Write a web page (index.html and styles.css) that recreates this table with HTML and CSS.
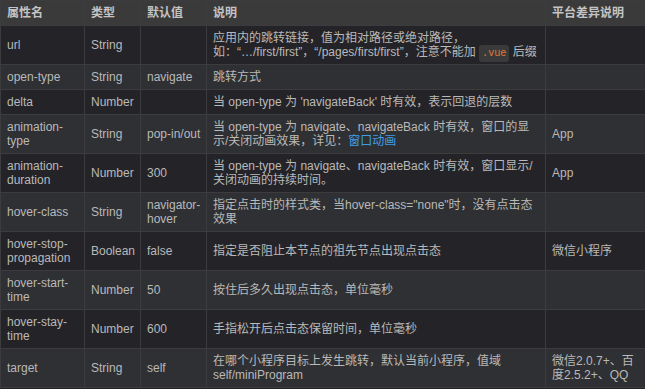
FILE: index.html
```html
<!DOCTYPE html>
<html lang="zh-CN">
<head>
<meta charset="utf-8">
<title>navigator 属性</title>
<link rel="stylesheet" href="styles.css">
</head>
<body>
<table class="props">
  <colgroup>
    <col class="c-name">
    <col class="c-type">
    <col class="c-default">
    <col class="c-desc">
    <col class="c-platform">
  </colgroup>
  <thead>
    <tr><th>属性名</th><th>类型</th><th>默认值</th><th>说明</th><th>平台差异说明</th></tr>
  </thead>
  <tbody>
    <tr><td>url</td><td>String</td><td></td><td>应用内的跳转链接，值为相对路径或绝对路径，<span class="nowrap">如：“…/first/first”，</span>“/pages/first/first”，注意不能加 <code class="code">.vue</code> 后缀</td><td></td></tr>
    <tr><td>open-type</td><td>String</td><td>navigate</td><td>跳转方式</td><td></td></tr>
    <tr><td>delta</td><td>Number</td><td></td><td>当 open-type 为 'navigateBack' 时有效，表示回退的层数</td><td></td></tr>
    <tr><td>animation-type</td><td>String</td><td>pop-in/out</td><td>当 open-type 为 navigate、navigateBack 时有效，窗口的显示/关闭动画效果，详见：<a class="link" href="#">窗口动画</a></td><td>App</td></tr>
    <tr><td>animation-duration</td><td>Number</td><td>300</td><td>当 open-type 为 navigate、navigateBack 时有效，窗口显示/关闭动画的持续时间。</td><td>App</td></tr>
    <tr><td>hover-class</td><td>String</td><td>navigator-hover</td><td>指定点击时的样式类，当hover-class="none"时，没有点击态效果</td><td></td></tr>
    <tr><td>hover-stop-propagation</td><td>Boolean</td><td>false</td><td>指定是否阻止本节点的祖先节点出现点击态</td><td>微信小程序</td></tr>
    <tr><td>hover-start-time</td><td>Number</td><td>50</td><td>按住后多久出现点击态，单位毫秒</td><td></td></tr>
    <tr><td>hover-stay-time</td><td>Number</td><td>600</td><td>手指松开后点击态保留时间，单位毫秒</td><td></td></tr>
    <tr><td>target</td><td>String</td><td>self</td><td>在哪个小程序目标上发生跳转，默认当前小程序，值域self/miniProgram</td><td>微信2.0.7+、百度2.5.2+、QQ</td></tr>
  </tbody>
</table>
</body>
</html>
```
FILE: styles.css
```css
html, body {
  margin: 0;
  padding: 0;
  background: #242428;
}

body {
  font-family: "Liberation Sans", "Noto Sans CJK SC", sans-serif;
  font-size: 12px;
  line-height: 14px;
  color: #b9b9b9;
}

.props {
  width: 645px;
  table-layout: fixed;
  border-collapse: collapse;
}

.c-name { width: 84px; }
.c-type { width: 56px; }
.c-default { width: 66px; }
.c-desc { width: 339px; }
.c-platform { width: 100px; }

.props th,
.props td {
  border: 1px solid #3c3c3e;
  padding: 5px 4px 5px 6px;
  text-align: left;
  vertical-align: middle;
}

.props th {
  background: #3a3a3a;
  color: #c4c4c4;
  font-weight: bold;
}

.props tbody tr {
  background: #242428;
}

.props tbody tr:nth-child(even) {
  background: #2f3033;
}

.nowrap {
  white-space: nowrap;
}

.code {
  font-family: "Liberation Mono", monospace;
  font-size: 10.2px;
  line-height: 11px;
  color: #e0773a;
  background: #3a3a3a;
  padding: 3px 3px;
  border-radius: 3px;
}

.link {
  color: #3f9de6;
  text-decoration: none;
}
```
